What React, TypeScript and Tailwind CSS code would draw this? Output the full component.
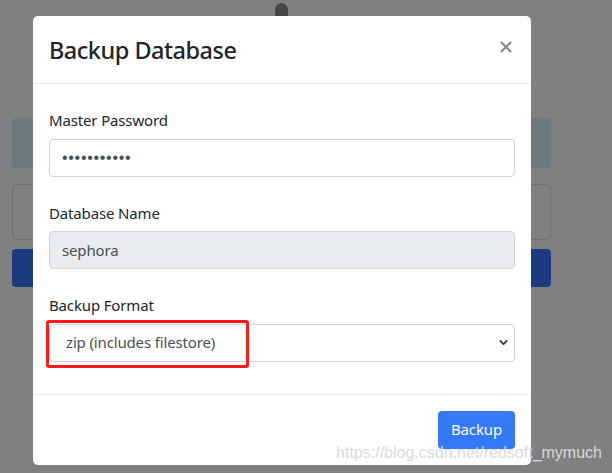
import { ChevronDown } from 'lucide-react';

const font = { fontFamily: '"Noto Sans", "Open Sans", sans-serif' };

function Field({ label, children }: { label: string; children: React.ReactNode }) {
  return (
    <div className="flex flex-col">
      <label className="text-[15px] leading-6 tracking-[-0.15px] text-[#212529] mb-[6.5px]">{label}</label>
      {children}
    </div>
  );
}

export default function App() {
  return (
    <div className="relative w-[612px] h-[473px] overflow-hidden bg-[#808080]" style={font}>
      {/* page behind the overlay */}
      <div className="flex flex-col px-[12px] w-[563px]">
        <div className="flex justify-center">
          <div className="w-[13px] h-[16px] mt-[3px] rounded-t-full bg-[#474747]" />
        </div>
        <div className="mt-[99px] h-[50px] rounded-[4px] bg-[#6b7b7d]" />
        <div className="mt-[16px] h-[56px] rounded-[4px] border border-[#6f6f6f]" />
        <div className="mt-[9px] h-[38px] rounded-[4px] bg-[#1a3a82]" />
      </div>

      {/* modal */}
      <div className="absolute left-[33px] top-[16px] w-[498px] rounded-[5px] bg-white flex flex-col">
        <div className="h-[68px] px-4 flex items-center justify-between border-b border-[#e9ecef]">
          <h5 className="text-[23.5px] leading-9 font-medium tracking-[-0.5px] text-[#212529]">Backup Database</h5>
          <svg width="12" height="12" viewBox="0 0 12 12" className="mr-[3px] -mt-[6px]">
            <path d="M1 1 L11 11 M11 1 L1 11" stroke="#8a8a8a" strokeWidth="2.2" />
          </svg>
        </div>

        <div className="px-4 pt-6 pb-8 flex flex-col gap-6">
          <Field label="Master Password">
            <div className="h-[38px] rounded-[4px] border border-[#ced4da] px-3 flex items-center text-[16px] text-[#495057] tracking-[0.7px]" style={{ fontFamily: '"Liberation Sans", sans-serif' }}>
              •••••••••••
            </div>
          </Field>
          <Field label="Database Name">
            <div className="h-[38px] rounded-[4px] border border-[#ced4da] bg-[#e9ecef] px-3 flex items-center text-[15px] tracking-[-0.15px] text-[#495057]">
              sephora
            </div>
          </Field>
          <Field label="Backup Format">
            <div className="relative h-[38px] rounded-[4px] border border-[#ced4da] pl-4 pr-[4px] flex items-center justify-between text-[15px] tracking-[-0.15px] text-[#495057]">
              <span>zip (includes filestore)</span>
              <ChevronDown size={13} strokeWidth={3.4} className="text-[#343a40]" />
              <div className="absolute -left-[4.5px] -top-[5px] w-[203px] h-[48px] rounded-[3px] border-[3px] border-[#ff1a1a]" />
            </div>
          </Field>
        </div>

        <div className="border-t border-[#e9ecef] px-4 py-4 flex justify-end">
          <button className="h-[38px] w-[77px] rounded-[4px] bg-[#3479f8] text-white text-[15px] tracking-[-0.15px]">Backup</button>
        </div>
      </div>

      <div
        className="absolute right-[10px] bottom-[10px] text-[16px] leading-5 text-[#dadada]"
        style={{ fontFamily: '"Liberation Sans", Arial, sans-serif' }}
      >
        https://blog.csdn.net/redsoft_mymuch
      </div>
    </div>
  );
}
